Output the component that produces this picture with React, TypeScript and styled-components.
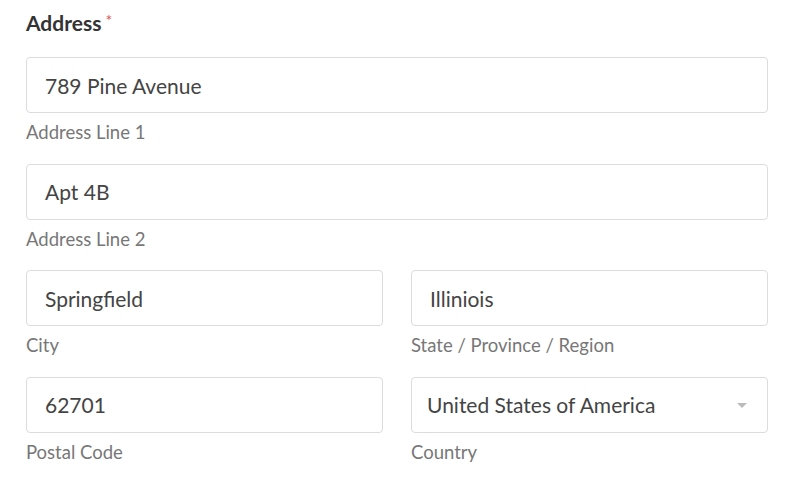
import React from "react";
import styled, { createGlobalStyle } from "styled-components";

const GlobalStyle = createGlobalStyle`
  body {
    margin: 0;
    background: #fff;
    font-family: Lato, "Open Sans", sans-serif;
  }
`;

const fields = [
  [{ value: "789 Pine Avenue", label: "Address Line 1" }],
  [{ value: "Apt 4B", label: "Address Line 2" }],
  [
    { value: "Springfield", label: "City" },
    { value: "Illiniois", label: "State / Province / Region" },
  ],
  [
    { value: "62701", label: "Postal Code" },
    { value: "United States of America", label: "Country", select: true },
  ],
];

const App = () => {
  return (
    <>
      <GlobalStyle />
      <Form>
        <Heading>
          Address<Required>*</Required>
        </Heading>
        {fields.map((row, i) => (
          <Row key={i} cols={row.length}>
            {row.map((f) => (
              <Field key={f.label}>
                <Box select={!!f.select}>
                  <Value>{f.value}</Value>
                  {f.select && <Caret />}
                </Box>
                <SubLabel>{f.label}</SubLabel>
              </Field>
            ))}
          </Row>
        ))}
      </Form>
    </>
  );
};

export default App;

const Form = styled.div`
  padding: 10px 31px 0 26px;
  display: flex;
  flex-direction: column;
`;

const Heading = styled.div`
  font-size: 21px;
  line-height: 26px;
  font-weight: 700;
  color: #333;
  margin-bottom: 21px;
`;

const Required = styled.span`
  color: #d9534f;
  font-size: 16px;
  line-height: 0;
  font-weight: 400;
  margin-left: 4px;
  position: relative;
  top: -5px;
`;

const Row = styled.div<{ cols: number }>`
  display: grid;
  grid-template-columns: repeat(${(p) => p.cols}, 1fr);
  column-gap: 28px;
  margin-bottom: 19.5px;
`;

const Field = styled.div`
  display: flex;
  flex-direction: column;
`;

const Box = styled.div<{ select: boolean }>`
  height: 56px;
  box-sizing: border-box;
  border: 1.5px solid #dcdcdc;
  border-radius: 4px;
  padding: 0 20px 0 ${(p) => (p.select ? "15px" : "18px")};
  display: flex;
  align-items: center;
  justify-content: space-between;
`;

const Value = styled.span`
  font-size: 21px;
  color: #444;
`;

const Caret = styled.span`
  width: 0;
  height: 0;
  border-left: 5px solid transparent;
  border-right: 5px solid transparent;
  border-top: 5px solid #bbb;
  margin-top: 2px;
`;

const SubLabel = styled.div`
  margin-top: 7px;
  font-size: 18.5px;
  line-height: 24px;
  color: #777;
`;
